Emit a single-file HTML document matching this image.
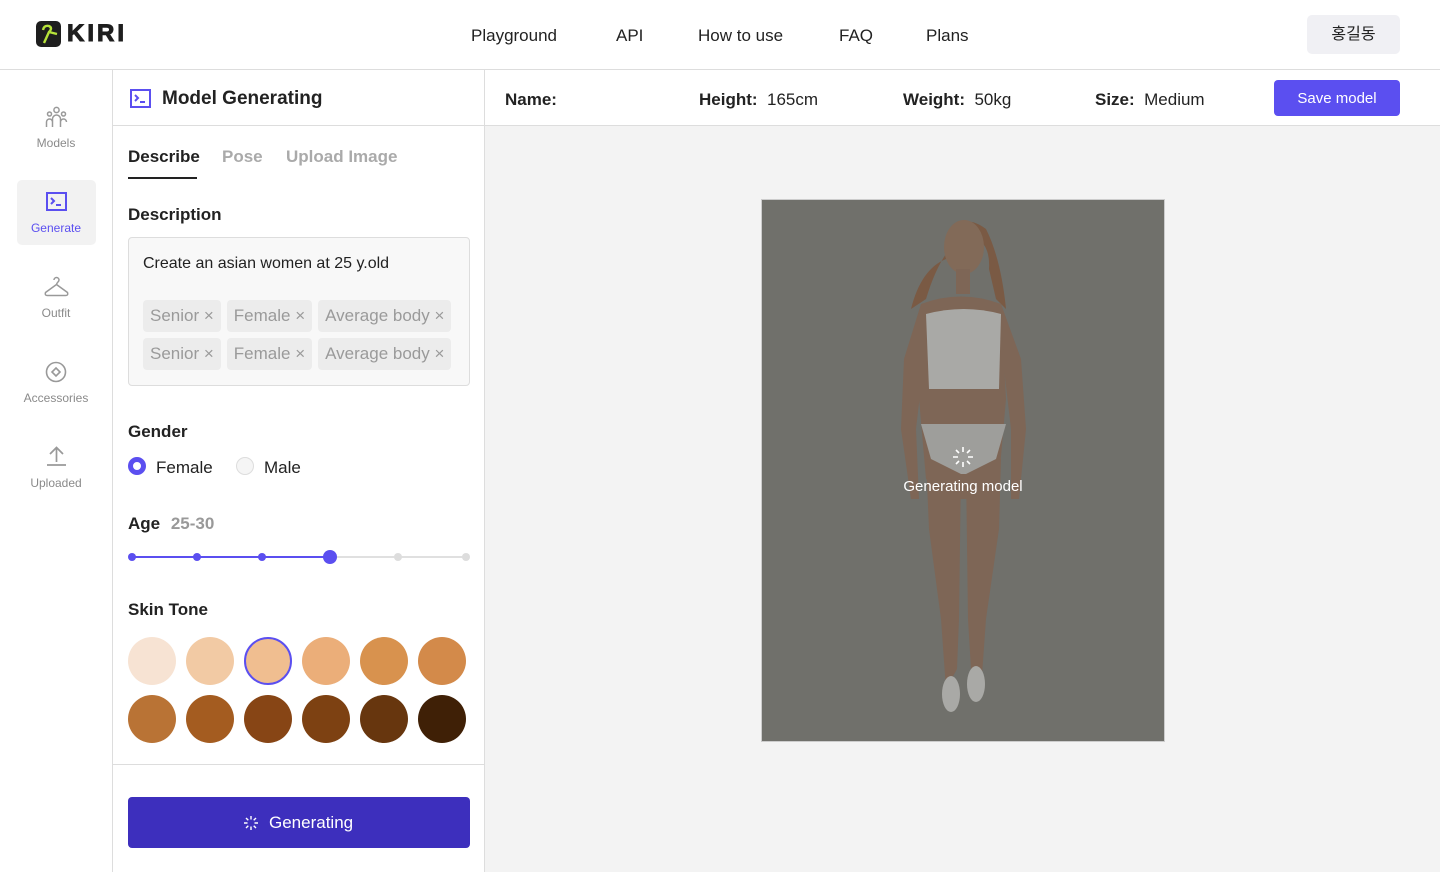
<!DOCTYPE html>
<html><head><meta charset="utf-8"><style>
*{box-sizing:border-box;margin:0;padding:0}
body{width:1440px;height:872px;overflow:hidden;font-family:"Liberation Sans","Noto Sans CJK KR",sans-serif;color:#222;background:#fff;position:relative}
.abs{position:absolute}
.nav a{position:absolute;top:26px;font-size:17px;color:#222;text-decoration:none}
.side{position:absolute;left:0;width:112px;text-align:center;font-size:12px;color:#8a8a8a}
.tag{display:inline-block;background:#ececec;border-radius:4px;height:32px;line-height:32px;padding:0 7px;color:#9a9a9a;font-size:17px;margin-right:6px}
.sw{position:absolute;width:48px;height:48px;border-radius:50%}
.dot{position:absolute;top:553px;width:8px;height:8px;border-radius:50%}
</style></head><body>
<!-- header -->
<div class="abs" style="left:0;top:0;width:1440px;height:70px;border-bottom:1px solid #ddd"></div>
<div class="abs" style="left:36px;top:21px;width:25px;height:26px;background:#1e1e1e;border-radius:5px"></div>
<svg class="abs" style="left:36px;top:21px" width="25" height="26"><path d="M7 9 Q8 4 13 5 Q17 7 13 11 L8 22 M13 11 L21 13" stroke="#b7e33a" stroke-width="2.4" fill="none"/></svg>
<div class="abs" style="left:67px;top:20px;font-size:24px;font-weight:900;letter-spacing:3px;color:#1e1e1e;-webkit-text-stroke:1px #1e1e1e">KIRI</div>
<div class="nav"><a style="left:471px">Playground</a><a style="left:616px">API</a><a style="left:698px">How to use</a><a style="left:839px">FAQ</a><a style="left:926px">Plans</a></div>
<div class="abs" style="left:1307px;top:15px;width:93px;height:39px;background:#f0f0f4;border-radius:5px;text-align:center;line-height:39px;font-size:16px">홍길동</div>
<!-- left nav -->
<div class="abs" style="left:112px;top:70px;width:1px;height:802px;background:#ddd"></div>
<svg class="abs" style="left:45px;top:106px" width="23" height="22" fill="none" stroke="#999" stroke-width="1.5"><circle cx="11.5" cy="4" r="2.6"/><circle cx="4.5" cy="8" r="2"/><circle cx="18.5" cy="8" r="2"/><path d="M1.5 21v-5a3 3 0 016 0M15.5 21v-5a3 3 0 016 0M7.5 21v-8a4 4 0 018 0v8"/></svg>
<div class="side" style="top:136px">Models</div>
<div class="abs" style="left:17px;top:180px;width:79px;height:65px;background:#f2f2f2;border-radius:5px"></div>
<svg class="abs" style="left:46px;top:192px" width="21" height="19" fill="none" stroke="#5b4ff0" stroke-width="2"><rect x="1" y="1" width="19" height="17"/><path d="M5 6l3 3-3 3M10 13h5"/></svg>
<div class="side" style="top:221px;color:#5b4ff0">Generate</div>
<svg class="abs" style="left:44px;top:276px" width="25" height="22" fill="none" stroke="#999" stroke-width="1.5"><path d="M10 4a2.5 2.5 0 115 0c0 2-2.5 2.5-2.5 4.5L1.5 16.5q-1 3 2 3h18q3 0 2-3L12.5 8.5"/></svg>
<div class="side" style="top:306px">Outfit</div>
<svg class="abs" style="left:45px;top:361px" width="22" height="22" fill="none" stroke="#999" stroke-width="1.6"><circle cx="11" cy="11" r="9.5"/><path d="M11 7l4 4-4 4-4-4z"/></svg>
<div class="side" style="top:391px">Accessories</div>
<svg class="abs" style="left:46px;top:446px" width="21" height="20" fill="none" stroke="#999" stroke-width="1.7"><path d="M10.5 16V2M4 8l6.5-6.5L17 8M1 19h19"/></svg>
<div class="side" style="top:476px">Uploaded</div>
<!-- panel -->
<div class="abs" style="left:484px;top:70px;width:1px;height:802px;background:#ddd"></div>
<div class="abs" style="left:113px;top:125px;width:371px;height:1px;background:#ddd"></div>
<svg class="abs" style="left:130px;top:89px" width="21" height="19" fill="none" stroke="#5b4ff0" stroke-width="2"><rect x="1" y="1" width="19" height="17"/><path d="M5 6l3 3-3 3M10 13h5"/></svg>
<div class="abs" style="left:162px;top:88px;font-size:19px;font-weight:bold">Model Generating</div>
<div class="abs" style="left:128px;top:147px;font-size:17px;font-weight:bold">Describe</div>
<div class="abs" style="left:128px;top:177px;width:69px;height:2px;background:#222"></div>
<div class="abs" style="left:222px;top:147px;font-size:17px;font-weight:bold;color:#aaa">Pose</div>
<div class="abs" style="left:286px;top:147px;font-size:17px;font-weight:bold;color:#aaa">Upload Image</div>
<div class="abs" style="left:128px;top:205px;font-size:17px;font-weight:bold">Description</div>
<div class="abs" style="left:128px;top:237px;width:342px;height:149px;border:1px solid #ddd;border-radius:4px;background:#f8f8f8;padding:17px 0 0 14px">
<div style="font-size:16px;margin-bottom:27px">Create an asian women at 25 y.old</div>
<div style="margin-bottom:6px"><span class="tag">Senior ×</span><span class="tag">Female ×</span><span class="tag">Average body ×</span></div>
<div><span class="tag">Senior ×</span><span class="tag">Female ×</span><span class="tag">Average body ×</span></div>
</div>
<div class="abs" style="left:128px;top:422px;font-size:17px;font-weight:bold">Gender</div>
<div class="abs" style="left:128px;top:457px;width:18px;height:18px;border-radius:50%;border:5px solid #5b4ff0"></div>
<div class="abs" style="left:156px;top:458px;font-size:17px">Female</div>
<div class="abs" style="left:236px;top:457px;width:18px;height:18px;border-radius:50%;border:1px solid #ddd;background:#f5f5f5"></div>
<div class="abs" style="left:264px;top:458px;font-size:17px">Male</div>
<div class="abs" style="left:128px;top:514px;font-size:17px;font-weight:bold">Age <span style="color:#999;font-weight:bold;margin-left:6px">25-30</span></div>
<div class="abs" style="left:132px;top:556px;width:198px;height:2px;background:#5b4ff0"></div>
<div class="abs" style="left:330px;top:556px;width:136px;height:2px;background:#e0e0e0"></div>
<div class="dot" style="left:128px;background:#5b4ff0"></div>
<div class="dot" style="left:193px;background:#5b4ff0"></div>
<div class="dot" style="left:258px;background:#5b4ff0"></div>
<div class="abs" style="left:323px;top:550px;width:14px;height:14px;border-radius:50%;background:#5b4ff0"></div>
<div class="dot" style="left:394px;background:#ddd"></div>
<div class="dot" style="left:462px;background:#ddd"></div>
<div class="abs" style="left:128px;top:600px;font-size:17px;font-weight:bold">Skin Tone</div>
<div class="sw" style="left:128px;top:637px;background:#f7e3d3"></div>
<div class="sw" style="left:186px;top:637px;background:#f2caa4"></div>
<div class="sw" style="left:244px;top:637px;background:#f0be90;border:2px solid #5b4ff0"></div>
<div class="sw" style="left:302px;top:637px;background:#ebae79"></div>
<div class="sw" style="left:360px;top:637px;background:#d8924e"></div>
<div class="sw" style="left:418px;top:637px;background:#d38a4a"></div>
<div class="sw" style="left:128px;top:695px;background:#b97335"></div>
<div class="sw" style="left:186px;top:695px;background:#a45c20"></div>
<div class="sw" style="left:244px;top:695px;background:#874515"></div>
<div class="sw" style="left:302px;top:695px;background:#7d4112"></div>
<div class="sw" style="left:360px;top:695px;background:#67360e"></div>
<div class="sw" style="left:418px;top:695px;background:#3f2006"></div>
<div class="abs" style="left:113px;top:764px;width:371px;height:1px;background:#ddd"></div>
<div class="abs" style="left:128px;top:797px;width:342px;height:51px;background:#3d2fbd;border-radius:4px"></div>
<svg class="abs" style="left:243px;top:815px" width="16" height="16" stroke="#fff" stroke-width="1.4"><path d="M8 1v3.5M8 11.5V15M1 8h3.5M11.5 8H15M3 3l2.3 2.3M10.7 10.7L13 13M3 13l2.3-2.3M10.7 5.3L13 3"/></svg>
<div class="abs" style="left:269px;top:813px;color:#fff;font-size:17px">Generating</div>
<!-- right -->
<div class="abs" style="left:485px;top:125px;width:955px;height:747px;background:#f3f3f3;border-top:1px solid #ddd"></div>
<div class="abs" style="left:505px;top:90px;font-size:17px"><b>Name:</b></div>
<div class="abs" style="left:699px;top:90px;font-size:17px"><b>Height:</b>&nbsp; 165cm</div>
<div class="abs" style="left:903px;top:90px;font-size:17px"><b>Weight:</b>&nbsp; 50kg</div>
<div class="abs" style="left:1095px;top:90px;font-size:17px"><b>Size:</b>&nbsp; Medium</div>
<div class="abs" style="left:1274px;top:80px;width:126px;height:36px;background:#5b4ff0;border-radius:4px;color:#fff;font-size:15px;text-align:center;line-height:37px">Save model</div>
<div class="abs" style="left:761px;top:199px;width:404px;height:543px;background:#70706b;border:1px solid #ccc"></div>
<svg class="abs" style="left:761px;top:199px" width="404" height="543">
<g fill="#7e6656">
<path d="M185 60 Q160 70 150 110 L165 100 Q180 50 205 35 Q230 40 228 70 L235 100 L245 110 Q240 60 225 30 Q205 15 190 30Z" fill="#7a5a44"/>
<ellipse cx="203" cy="48" rx="20" ry="27" fill="#826a58"/>
<rect x="195" y="70" width="14" height="25"/>
<path d="M160 105 Q200 90 240 105 L245 200 L238 280 L210 300 L195 300 L165 280 L158 200Z"/>
<path d="M160 105 L143 160 L140 230 L150 300 L158 300 L155 230 L162 170Z"/>
<path d="M240 105 L260 160 L265 230 L258 300 L250 300 L250 230 L243 170Z"/>
<path d="M165 260 L200 270 L198 420 L196 470 L185 490 L180 420 L168 330Z"/>
<path d="M240 260 L205 270 L207 420 L210 470 L220 490 L225 420 L238 330Z"/>
</g>
<path d="M165 115 Q203 105 240 115 L238 190 L168 190Z" fill="#a9a9a6"/>
<path d="M160 225 L245 225 L235 260 L205 275 L200 275 L170 260Z" fill="#9e9e9b"/>
<ellipse cx="190" cy="495" rx="9" ry="18" fill="#a9a9a6"/>
<ellipse cx="215" cy="485" rx="9" ry="18" fill="#a9a9a6"/>
<g stroke="#fff" stroke-width="1.6"><path d="M202 248v5M202 263v5M192 258h5M207 258h5M195 251l3 3M206 262l3 3M195 265l3-3M206 254l3-3"/></g>
<text x="202" y="292" fill="#fff" font-size="15" text-anchor="middle" font-family="Liberation Sans">Generating model</text>
</svg>
</body></html>
